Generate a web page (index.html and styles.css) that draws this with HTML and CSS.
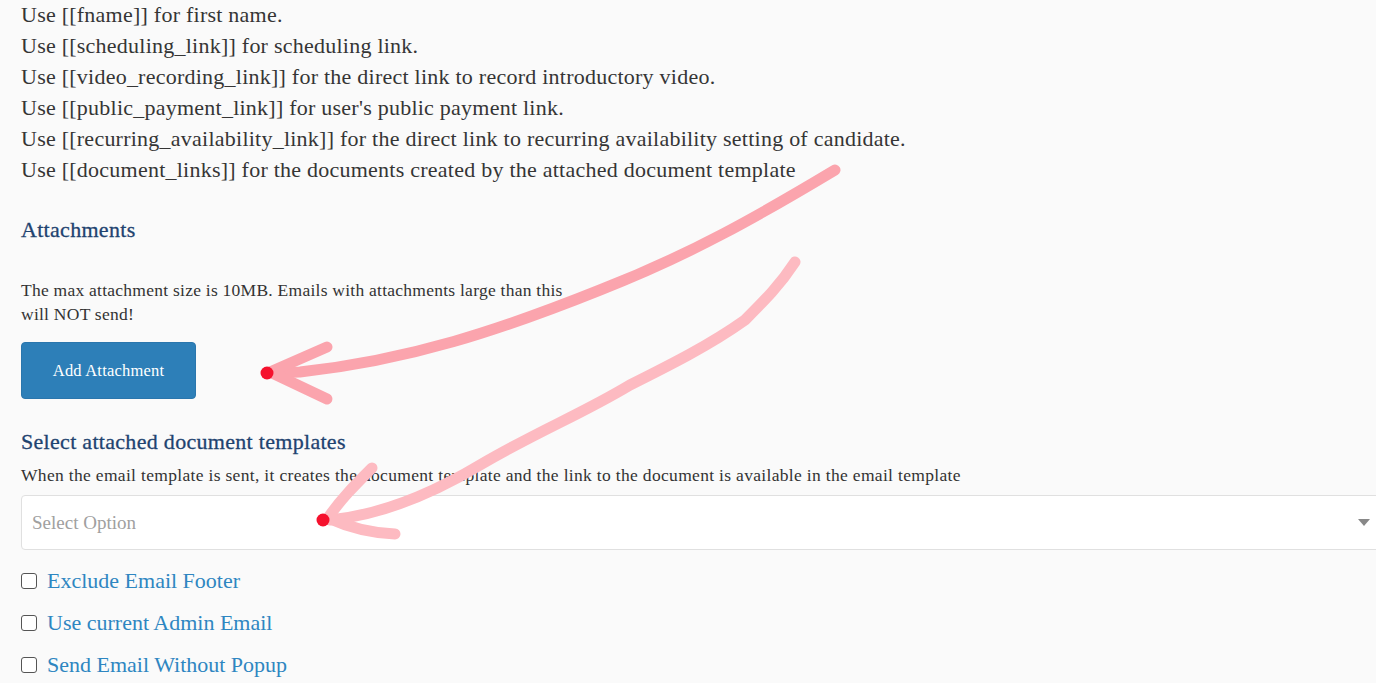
FILE: index.html
```html
<!DOCTYPE html>
<html>
<head>
<meta charset="utf-8">
<link rel="stylesheet" href="styles.css">
</head>
<body>
<div class="page">
  <div class="vars">
    <div>Use [[fname]] for first name.</div>
    <div>Use [[scheduling_link]] for scheduling link.</div>
    <div>Use [[video_recording_link]] for the direct link to record introductory video.</div>
    <div>Use [[public_payment_link]] for user's public payment link.</div>
    <div>Use [[recurring_availability_link]] for the direct link to recurring availability setting of candidate.</div>
    <div>Use [[document_links]] for the documents created by the attached document template</div>
  </div>

  <h3 class="heading attach-heading">Attachments</h3>
  <p class="note">The max attachment size is 10MB. Emails with attachments large than this will NOT send!</p>
  <button class="btn">Add Attachment</button>

  <h3 class="heading tpl-heading">Select attached document templates</h3>
  <p class="desc">When the email template is sent, it creates the document template and the link to the document is available in the email template</p>
  <div class="select">
    <span class="placeholder">Select Option</span>
    <span class="caret"></span>
  </div>

  <div class="checks">
    <label class="check"><span class="box"></span><span class="lbl">Exclude Email Footer</span></label>
    <label class="check"><span class="box"></span><span class="lbl">Use current Admin Email</span></label>
    <label class="check"><span class="box"></span><span class="lbl">Send Email Without Popup</span></label>
  </div>
</div>

<svg class="overlay" width="1376" height="683" viewBox="0 0 1376 683">
  <g fill="none" stroke-linecap="round" stroke-linejoin="round">
    <path d="M835 170 C760 215 690 255 600 290 C500 330 410 360 300 372 L270 373" stroke="#fba4ad" stroke-width="11"/>
    <path d="M327 347 L270 372 L327 399" stroke="#fba4ad" stroke-width="11"/>
    <path d="M795 262 C780 285 765 300 745 320 C710 345 670 365 630 385 C580 415 540 430 480 465 C430 495 380 515 330 520" stroke="#fdbac1" stroke-width="11"/>
    <path d="M372 468 C355 485 340 500 328 518 C350 528 370 533 395 534" stroke="#fdbac1" stroke-width="11"/>
  </g>
  <circle cx="267" cy="373" r="6.5" fill="#f5112d"/>
  <circle cx="323" cy="520" r="6.5" fill="#f5112d"/>
</svg>
</body>
</html>
```

FILE: styles.css
```css
html, body {
  margin: 0;
  padding: 0;
  background: #fafafa;
  overflow: hidden;
  width: 1376px;
  height: 683px;
}

body {
  position: relative;
  font-family: "Liberation Serif", "Times New Roman", serif;
  color: #333;
}

.page {
  padding: 0 0 0 21px;
}

.vars {
  font-size: 22px;
  letter-spacing: 0.24px;
  line-height: 31px;
  color: #353535;
  margin-top: -1px;
}

.heading {
  margin: 0;
  font-weight: normal;
  color: #1f4370;
  font-size: 22px;
  letter-spacing: 0.3px;
  line-height: 28px;
  -webkit-text-stroke: 0.3px #1f4370;
}

.attach-heading {
  margin-top: 31px;
}

.note {
  margin: 34px 0 0 0;
  width: 560px;
  font-size: 17.5px;
  letter-spacing: 0.25px;
  line-height: 24px;
  color: #333;
}

.btn {
  display: block;
  margin-top: 16px;
  width: 175px;
  height: 57px;
  background: #2d7fb8;
  border: 1px solid #2a76ad;
  border-radius: 4px;
  color: #fff;
  font-family: "Liberation Serif", "Times New Roman", serif;
  font-size: 16.5px;
  letter-spacing: 0.2px;
  padding: 0;
}

.tpl-heading {
  margin-top: 29px;
}

.desc {
  margin: 7px 0 0 0;
  font-size: 17.5px;
  letter-spacing: 0.32px;
  line-height: 24px;
  color: #333;
}

.select {
  margin-top: 8px;
  width: 1370px;
  height: 55px;
  box-sizing: border-box;
  border: 1px solid #e0e0e0;
  border-radius: 4px;
  background: #fff;
  display: flex;
  align-items: center;
  padding-left: 10px;
}

.placeholder {
  color: #a0a0a0;
  font-size: 19px;
}

.caret {
  position: absolute;
  left: 1358px;
  width: 0;
  height: 0;
  border-left: 6px solid transparent;
  border-right: 6px solid transparent;
  border-top: 7px solid #888;
}

.checks {
  margin-top: 16px;
  display: flex;
  flex-direction: column;
  gap: 12px;
}

.check {
  display: flex;
  align-items: center;
  height: 30px;
}

.box {
  width: 14px;
  height: 14px;
  border: 1px solid #555;
  border-radius: 3px;
  background: #fff;
  margin-right: 10px;
  margin-top: -1px;
}

.lbl {
  font-size: 22px;
  letter-spacing: 0;
  color: #2e86c1;
}

.overlay {
  position: absolute;
  left: 0;
  top: 0;
  pointer-events: none;
}
```
